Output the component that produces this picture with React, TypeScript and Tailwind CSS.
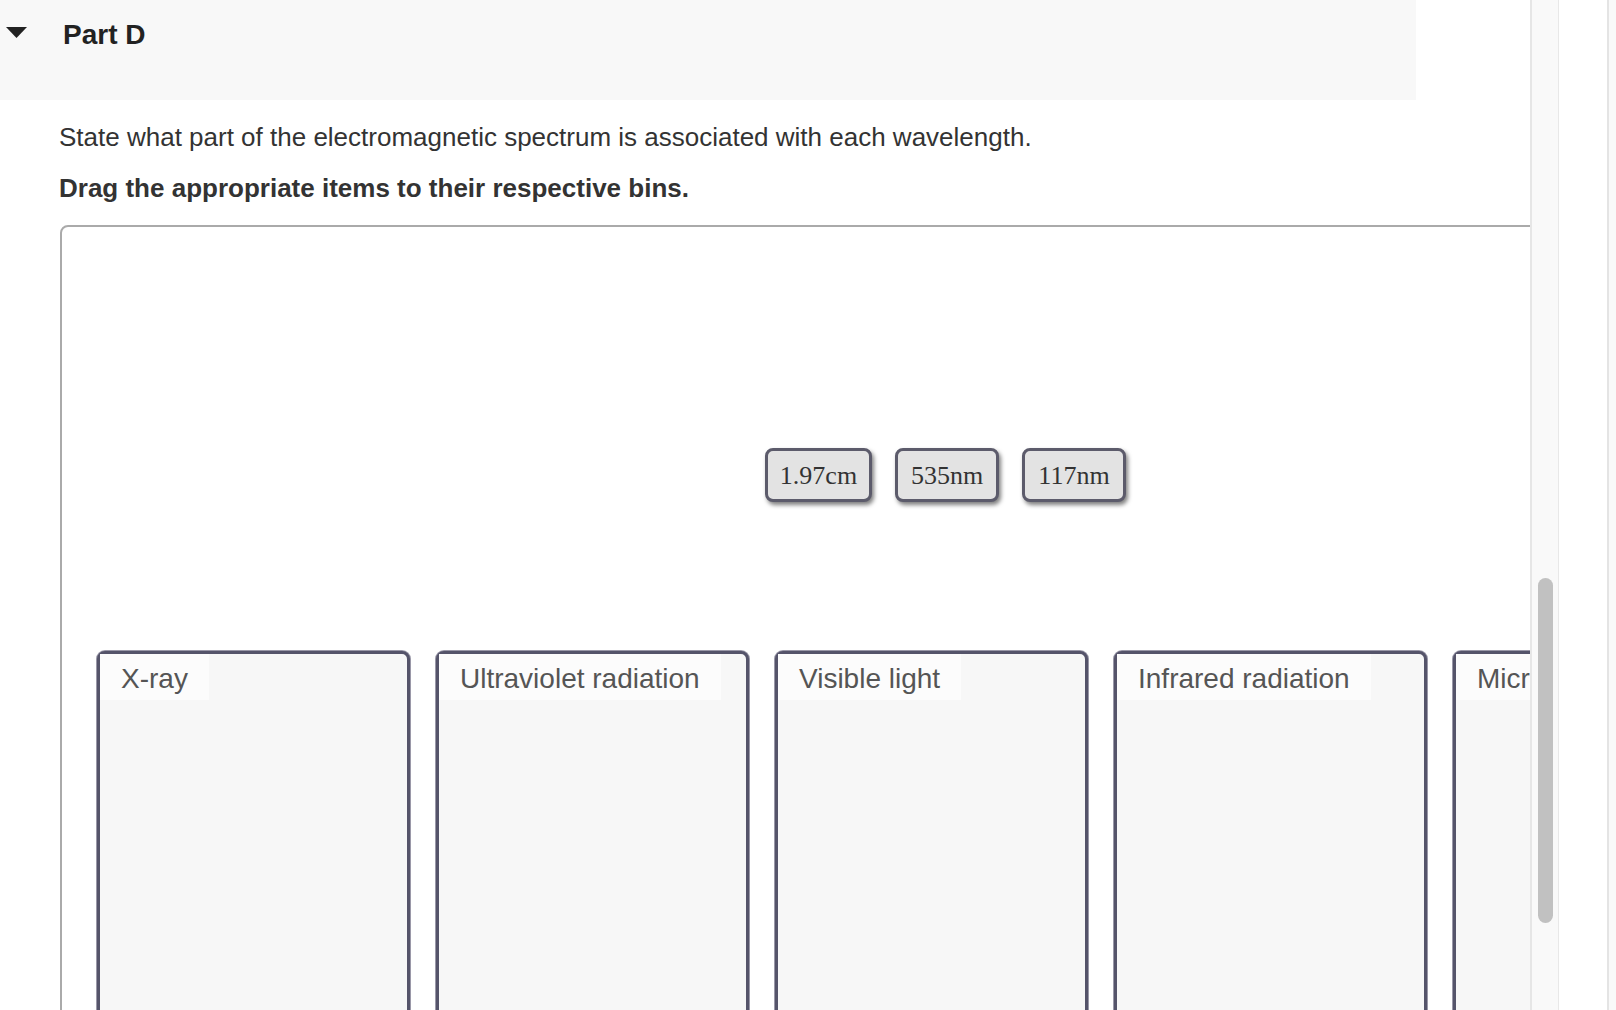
import React from "react";

const chips = [
  { t: "1.97cm", w: "w-[107px]" },
  { t: "535nm", w: "w-[104px]" },
  { t: "117nm", w: "w-[104px]" },
];

const bins = ["X-ray", "Ultraviolet radiation", "Visible light", "Infrared radiation", "Microwaves"];

export default function App() {
  return (
    <div className="w-[1616px] h-[1010px] overflow-hidden flex bg-white" style={{ fontFamily: '"Liberation Sans", Arial, sans-serif' }}>
      <div className="w-[1530px] h-full overflow-hidden shrink-0 bg-white">
        <div className="w-[1416px] h-[100px] bg-[#f8f8f8] flex items-start">
          <svg className="ml-[6px] mt-[27px] shrink-0" width="21" height="11" viewBox="0 0 21 11">
            <polygon points="0,0 21,0 10.5,11" fill="#222222" />
          </svg>
          <div className="ml-[36px] pt-[19px] text-[28px] leading-[32px] font-bold text-[#222222]">Part D</div>
        </div>
        <div className="pl-[59px] pt-[22px] text-[26px] leading-[30px] text-[#333333]">
          State what part of the electromagnetic spectrum is associated with each wavelength.
        </div>
        <div className="pl-[59px] pt-[21px] text-[26px] leading-[30px] font-bold text-[#333333]">
          Drag the appropriate items to their respective bins.
        </div>
        <div className="ml-[60px] mt-[22px] w-[2000px] h-[800px] border-2 border-[#aaaaaa] rounded-tl-[8px] flex flex-col">
          <div className="flex gap-[23px] pl-[703px] pt-[221px]">
            {chips.map((c) => (
              <div
                key={c.t}
                className={`${c.w} h-[54px] border-[3px] border-[#5c5b6b] rounded-[8px] bg-[#e3e3e3] shadow-[2px_3px_4px_rgba(0,0,0,0.5)] flex items-center justify-center text-[26px] text-[#333333]`}
                style={{ fontFamily: '"Liberation Serif", "Times New Roman", serif' }}
              >
                {c.t}
              </div>
            ))}
          </div>
          <div className="flex gap-[26px] pl-[35px] pt-[149px]">
            {bins.map((b) => (
              <div
                key={b}
                className="w-[313px] h-[500px] shrink-0 border-[3px] border-[#55546a] rounded-[8px] bg-[#f7f7f7] shadow-[0_0_0_1px_#9a98a8] flex flex-col items-start"
              >
                <div className="h-[46px] px-[21px] pt-[3px] bg-[#fcfcfc] text-[28px] leading-[43px] text-[#555555] whitespace-nowrap">
                  {b}
                </div>
              </div>
            ))}
          </div>
        </div>
      </div>
      <div className="w-[29px] h-full shrink-0 bg-[#f9f9f9] border-l-2 border-l-[#e6e6e6] border-r border-r-[#e8e8e8] flex flex-col items-center pt-[578px]">
        <div className="w-[15px] h-[345px] rounded-full bg-[#c1c1c1]" />
      </div>
      <div className="w-[50px] h-full shrink-0 bg-white border-r-2 border-r-[#e4e4e4]" />
      <div className="flex-1 h-full bg-[#f9f9f9]" />
    </div>
  );
}
